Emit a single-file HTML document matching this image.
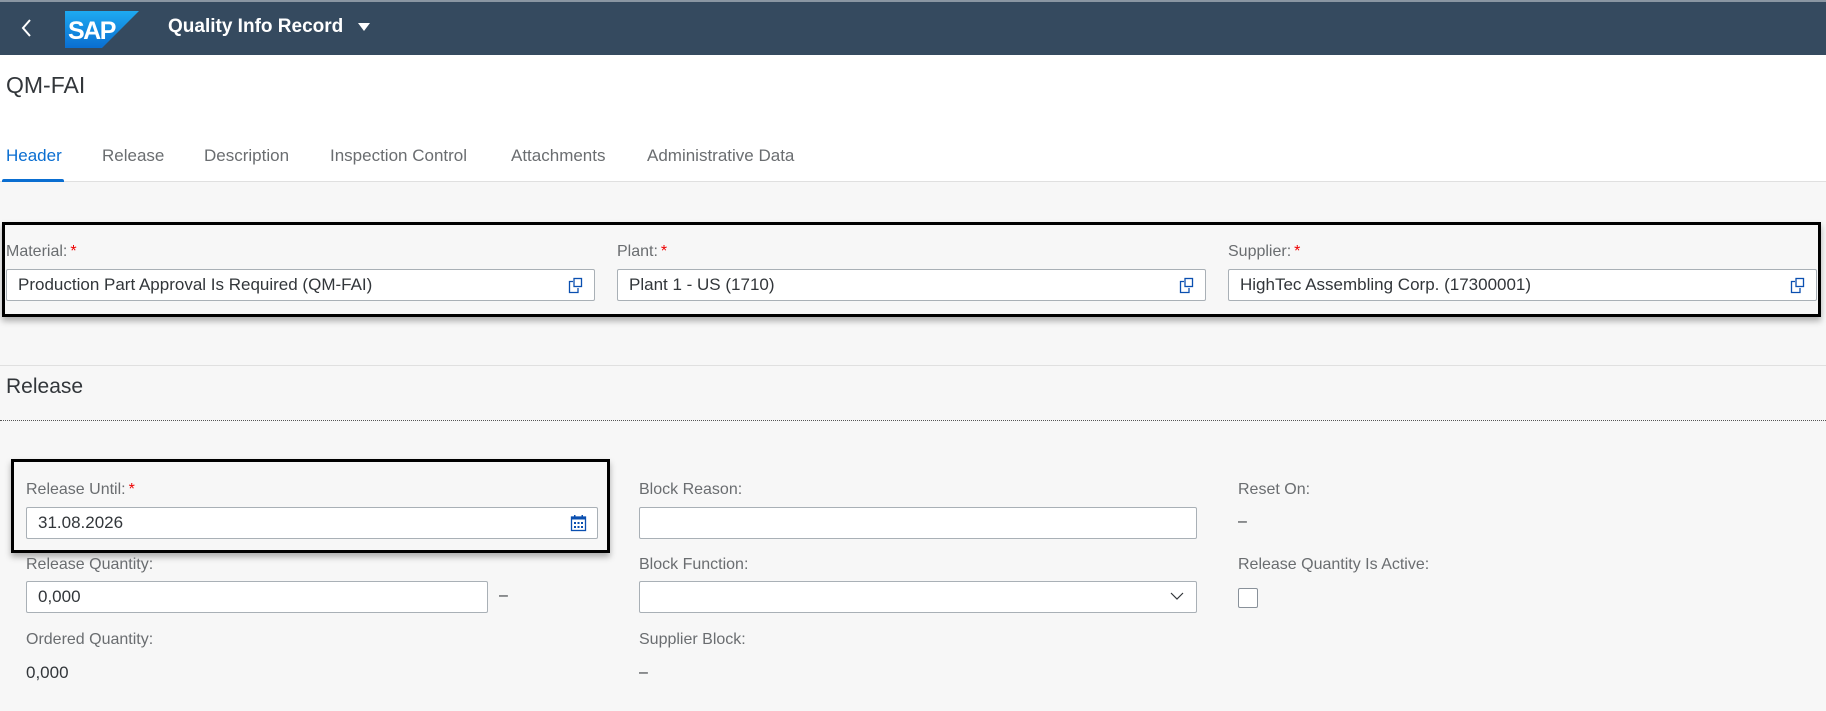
<!DOCTYPE html>
<html><head><meta charset="utf-8"><style>
*{box-sizing:border-box;margin:0;padding:0}
body{width:1826px;height:711px;background:#f7f7f7;font-family:"Liberation Sans",Arial,sans-serif;position:relative;overflow:hidden;color:#32363a}
.a{position:absolute}
.shell{left:0;top:0;width:1826px;height:55px;background:#354a5f;border-top:2px solid #8a96a2}
.lbl{font-size:16px;color:#6a6d70;line-height:18px}
.req{color:#e00;margin-left:3px}
.inp{background:#fff;border:1px solid #a9b0b6;border-radius:2px;height:32px;font-size:17px;line-height:30px;padding-left:11px;color:#32363a}
.tab{font-size:17px;color:#6a6d70;top:146px;line-height:20px}
.box{border:3px solid #000;box-shadow:0 4px 6px rgba(0,0,0,.3)}
.ic{position:absolute;right:10px;top:7px}
</style></head><body>
<div class="a shell"></div>
<svg class="a" style="left:20px;top:17px" width="14" height="22" viewBox="0 0 14 22"><path d="M10 3 L3 11 L10 19" stroke="#fff" stroke-width="2" fill="none"/></svg>
<svg class="a" style="left:65px;top:11px" width="74" height="37" viewBox="0 0 74 37"><defs><linearGradient id="g" x1="0" y1="0" x2="0" y2="1"><stop offset="0" stop-color="#1eaaf1"/><stop offset="1" stop-color="#0a6ed1"/></linearGradient></defs><polygon points="0,0 74,0 37,37 0,37" fill="url(#g)"/><text x="3" y="28" font-family="Liberation Sans,Arial" font-weight="bold" font-size="25" fill="#fff" letter-spacing="-1.5">SAP</text></svg>
<div class="a" style="left:168px;top:15px;font-size:19px;font-weight:bold;color:#fff;line-height:24px">Quality Info Record</div>
<svg class="a" style="left:358px;top:23px" width="12" height="9"><polygon points="0,0 12,0 6,8" fill="#fff"/></svg>
<div class="a" style="left:0;top:55px;width:1826px;height:127px;background:#fff;border-bottom:1px solid #e0e0e0"></div>
<div class="a" style="left:6px;top:72px;font-size:23px;color:#32363a">QM-FAI</div>
<div class="a tab" style="left:6px;color:#0a6ed1">Header</div>
<div class="a" style="left:2px;top:179px;width:62px;height:3px;background:#0a6ed1;border-radius:2px 2px 0 0"></div>
<div class="a tab" style="left:102px">Release</div>
<div class="a tab" style="left:204px">Description</div>
<div class="a tab" style="left:330px">Inspection Control</div>
<div class="a tab" style="left:511px">Attachments</div>
<div class="a tab" style="left:647px">Administrative Data</div>

<div class="a box" style="left:2px;top:222px;width:1819px;height:95px"></div>
<div class="a lbl" style="left:6px;top:243px">Material:<span class="req">*</span></div>
<div class="a inp" style="left:6px;top:269px;width:589px">Production Part Approval Is Required (QM-FAI)<svg class="ic" width="17" height="17" viewBox="0 0 17 17"><path d="M6 4.5H2.5V15.5H11V11" fill="none" stroke="#0a4fb0" stroke-width="1.3"/><rect x="7" y="1.5" width="7.5" height="8" fill="none" stroke="#0a4fb0" stroke-width="1.3"/></svg></div>
<div class="a lbl" style="left:617px;top:243px">Plant:<span class="req">*</span></div>
<div class="a inp" style="left:617px;top:269px;width:589px">Plant 1 - US (1710)<svg class="ic" width="17" height="17" viewBox="0 0 17 17"><path d="M6 4.5H2.5V15.5H11V11" fill="none" stroke="#0a4fb0" stroke-width="1.3"/><rect x="7" y="1.5" width="7.5" height="8" fill="none" stroke="#0a4fb0" stroke-width="1.3"/></svg></div>
<div class="a lbl" style="left:1228px;top:243px">Supplier:<span class="req">*</span></div>
<div class="a inp" style="left:1228px;top:269px;width:589px">HighTec Assembling Corp. (17300001)<svg class="ic" width="17" height="17" viewBox="0 0 17 17"><path d="M6 4.5H2.5V15.5H11V11" fill="none" stroke="#0a4fb0" stroke-width="1.3"/><rect x="7" y="1.5" width="7.5" height="8" fill="none" stroke="#0a4fb0" stroke-width="1.3"/></svg></div>

<div class="a" style="left:0;top:365px;width:1826px;height:1px;background:#e0e0e0"></div>
<div class="a" style="left:6px;top:375px;font-size:21px;color:#32363a">Release</div>
<div class="a" style="left:0;top:420px;width:1826px;border-top:1px dotted #555"></div>

<div class="a box" style="left:11px;top:459px;width:599px;height:94px"></div>
<div class="a lbl" style="left:26px;top:481px">Release Until:<span class="req">*</span></div>
<div class="a inp" style="left:26px;top:507px;width:572px">31.08.2026<svg class="ic" style="top:6px" width="17" height="18" viewBox="0 0 17 18"><rect x="1.5" y="3" width="14" height="13.5" fill="none" stroke="#0a4fb0" stroke-width="1.3"/><rect x="1.5" y="3" width="14" height="2.5" fill="#0a4fb0"/><rect x="4" y="1" width="1.5" height="3" fill="#0a4fb0"/><rect x="11.5" y="1" width="1.5" height="3" fill="#0a4fb0"/><g fill="#0a4fb0"><rect x="4" y="8" width="2" height="2"/><rect x="7.5" y="8" width="2" height="2"/><rect x="11" y="8" width="2" height="2"/><rect x="4" y="12" width="2" height="2"/><rect x="7.5" y="12" width="2" height="2"/><rect x="11" y="12" width="2" height="2"/></g></svg></div>
<div class="a lbl" style="left:639px;top:481px">Block Reason:</div>
<div class="a inp" style="left:639px;top:507px;width:558px"></div>
<div class="a lbl" style="left:1238px;top:481px">Reset On:</div>
<div class="a" style="left:1238px;top:513px;font-size:16px">–</div>

<div class="a lbl" style="left:26px;top:556px">Release Quantity:</div>
<div class="a inp" style="left:26px;top:581px;width:462px">0,000</div>
<div class="a" style="left:499px;top:587px;font-size:16px">–</div>
<div class="a lbl" style="left:639px;top:556px">Block Function:</div>
<div class="a inp" style="left:639px;top:581px;width:558px"><svg class="ic" style="top:9px;right:12px" width="14" height="10"><path d="M1 2L7 8L13 2" fill="none" stroke="#32363a" stroke-width="1.2"/></svg></div>
<div class="a lbl" style="left:1238px;top:556px">Release Quantity Is Active:</div>
<div class="a" style="left:1238px;top:588px;width:20px;height:20px;border:1px solid #89919a;border-radius:2px;background:#fff"></div>

<div class="a lbl" style="left:26px;top:631px">Ordered Quantity:</div>
<div class="a" style="left:26px;top:663px;font-size:17px">0,000</div>
<div class="a lbl" style="left:639px;top:631px">Supplier Block:</div>
<div class="a" style="left:639px;top:664px;font-size:16px">–</div>
</body></html>
